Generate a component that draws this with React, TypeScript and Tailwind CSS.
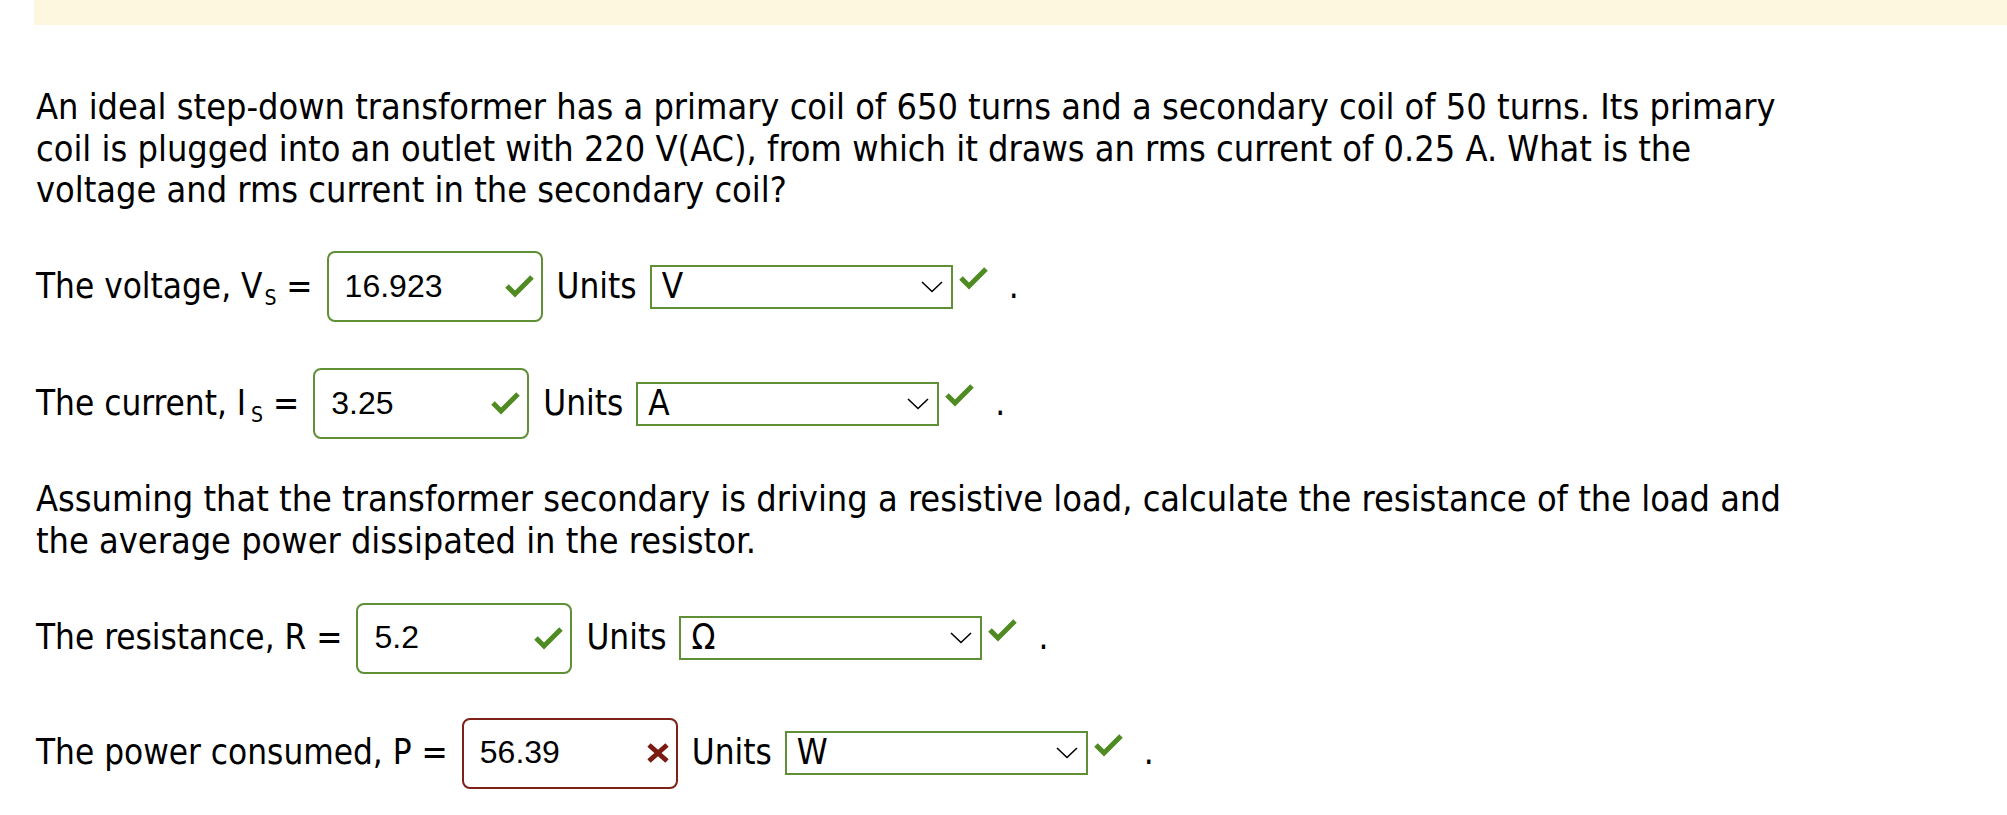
import React from 'react';

type Status = 'correct' | 'wrong';

const CheckMark = ({ className }: { className: string }) => (
  <svg viewBox="0 0 30 23" className={className}>
    <path d="M2 11 L10 19 L27 2" fill="none" stroke="currentColor" strokeWidth="5" />
  </svg>
);

const CrossMark = () => (
  <svg viewBox="0 0 24 20" className="h-[20px] w-[24px] text-[#7b1a12]">
    <path d="M3 2 L21 18 M21 2 L3 18" fill="none" stroke="currentColor" strokeWidth="5" />
  </svg>
);

const Chevron = () => (
  <svg viewBox="0 0 22 12" className="h-[12px] w-[22px] text-black">
    <path d="M1 1 L11 10.5 L21 1" fill="none" stroke="currentColor" strokeWidth="1.6" />
  </svg>
);

type RowProps = {
  label: React.ReactNode;
  value: string;
  status: Status;
  unit: string;
  className: string;
};

const AnswerRow = ({ label, value, status, unit, className }: RowProps) => {
  const ok = status === 'correct';
  return (
    <div className={`flex h-[71px] items-center whitespace-nowrap text-[34.8px] ${className}`}>
      <span>{label}</span>
      <div
        className={`ml-[14px] flex h-[71px] w-[216px] items-center justify-between rounded-[8px] border-2 pl-[16px] pr-[6px] ${
          ok ? 'border-[#5f8f37]' : 'border-[#7d2119]'
        }`}
      >
        <span className="font-['Liberation_Sans',Arial,sans-serif] text-[32px]">{value}</span>
        {ok ? <CheckMark className="h-[23px] w-[30px] text-[#4f8a22]" /> : <CrossMark />}
      </div>
      <span className="ml-[14px]">Units</span>
      <div className="ml-[13px] flex h-[44px] w-[303px] items-center justify-between border-2 border-[#5f8f37] pl-[10px] pr-[8px]">
        <span>{unit}</span>
        <Chevron />
      </div>
      <CheckMark className="ml-[6px] mt-[-16px] h-[23px] w-[30px] text-[#4f8a22]" />
      <span className="ml-[20px]">.</span>
    </div>
  );
};

const Sub = ({ children, className }: { children: React.ReactNode; className: string }) => (
  <sub className={`bottom-[-7px] text-[21px] ${className}`}>{children}</sub>
);

export default function App() {
  return (
    <div className="min-h-screen bg-white font-['DejaVu_Sans_Condensed','DejaVu_Sans',sans-serif] text-[35.8px] leading-[41.7px] text-black">
      <div className="ml-[34px] h-[25px] bg-[#fef7e0]" />
      <div className="pl-[36px]">
        <p className="mt-[61px]">
          An ideal step-down transformer has a primary coil of 650 turns and a secondary coil of 50 turns. Its primary
          <br />
          coil is plugged into an outlet with 220 V(AC), from which it draws an rms current of 0.25 A. What is the
          <br />
          voltage and rms current in the secondary coil?
        </p>

        <AnswerRow
          className="mt-[40px]"
          label={
            <>
              The voltage, V<Sub className="ml-[2px]">S</Sub> =
            </>
          }
          value="16.923"
          status="correct"
          unit="V"
        />
        <AnswerRow
          className="mt-[46px]"
          label={
            <>
              The current, I<Sub className="ml-[5px]">S</Sub> =
            </>
          }
          value="3.25"
          status="correct"
          unit="A"
        />

        <p className="mt-[39px]">
          Assuming that the transformer secondary is driving a resistive load, calculate the resistance of the load and
          <br />
          the average power dissipated in the resistor.
        </p>

        <AnswerRow className="mt-[41px]" label="The resistance, R =" value="5.2" status="correct" unit="Ω" />
        <AnswerRow className="mt-[44px]" label="The power consumed, P =" value="56.39" status="wrong" unit="W" />
      </div>
    </div>
  );
}
